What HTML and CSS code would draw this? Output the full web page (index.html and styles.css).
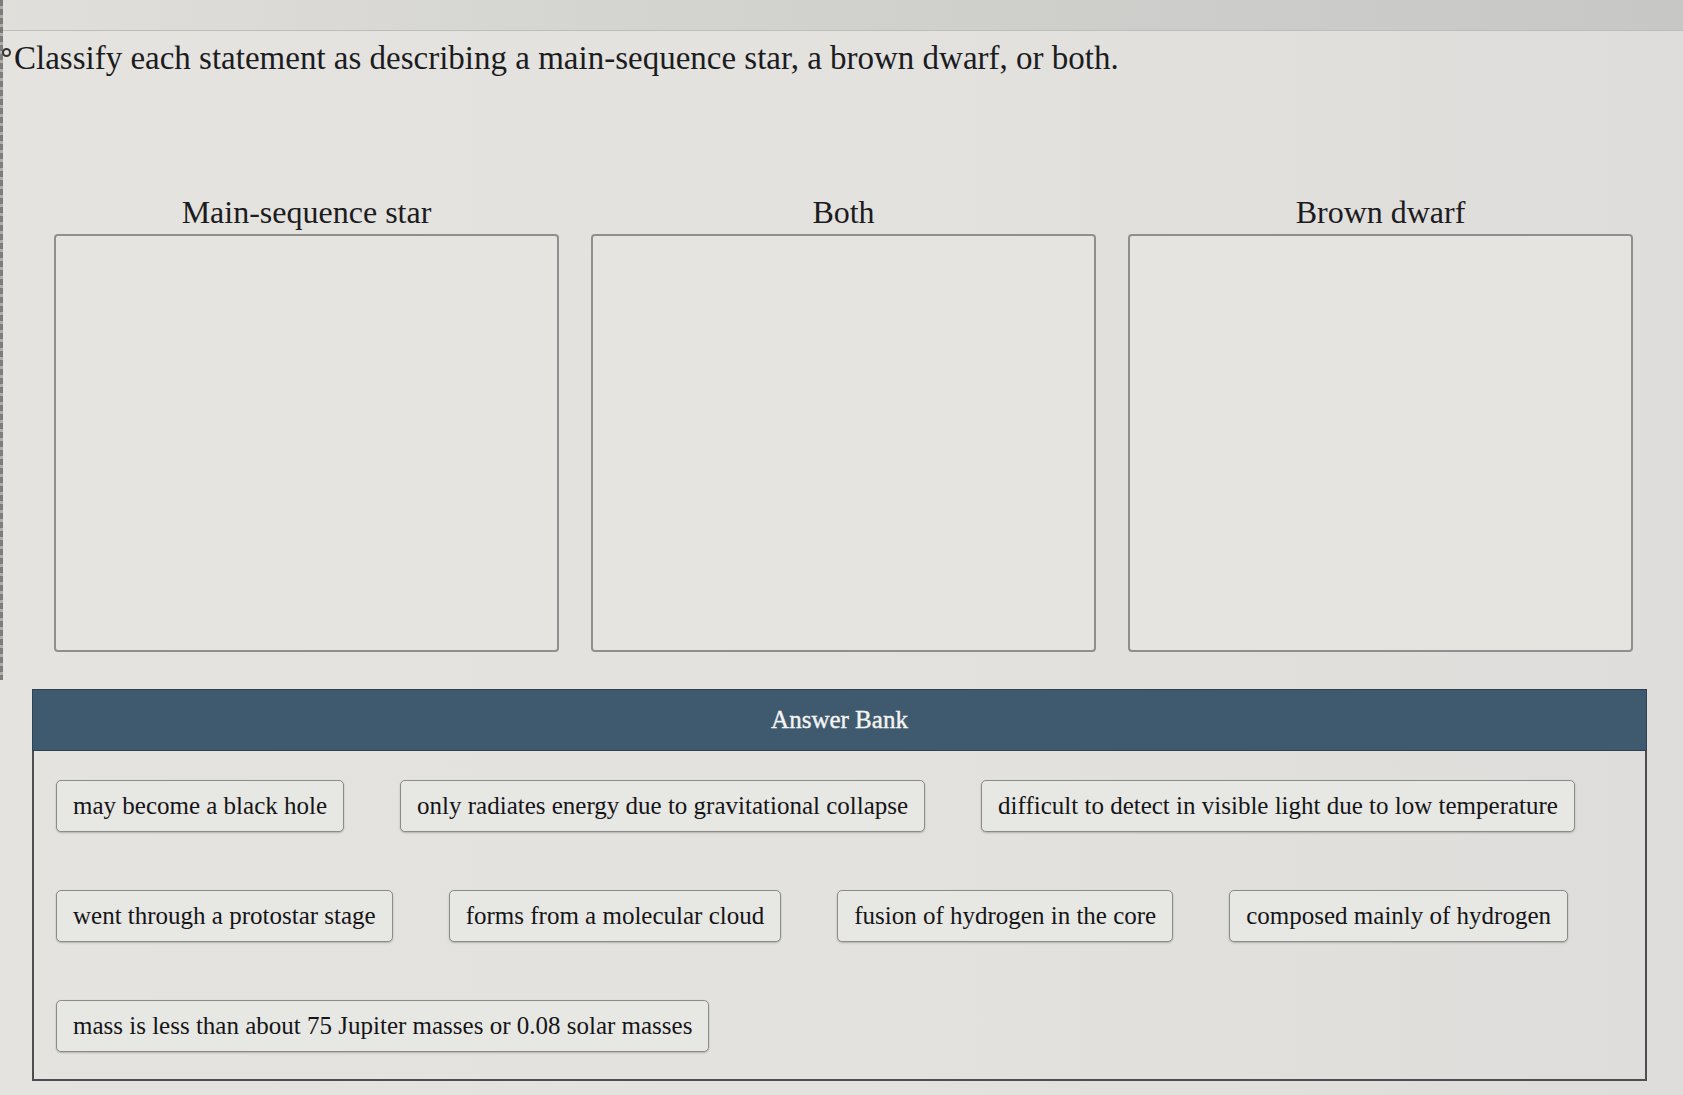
FILE: index.html
```html
<!DOCTYPE html>
<html lang="en">
<head>
<meta charset="utf-8">
<title>Classify statements</title>
<link rel="stylesheet" href="styles.css">
</head>
<body>
<div class="topband"></div>
<div class="edge"></div>
<main class="page">
  <h1 class="prompt"><span class="marker"></span>Classify each statement as describing a main-sequence star, a brown dwarf, or both.</h1>

  <div class="columns">
    <div class="col">
      <div class="col-title">Main-sequence star</div>
      <div class="dropzone"></div>
    </div>
    <div class="col">
      <div class="col-title">Both</div>
      <div class="dropzone"></div>
    </div>
    <div class="col">
      <div class="col-title">Brown dwarf</div>
      <div class="dropzone"></div>
    </div>
  </div>

  <section class="bank">
    <div class="bank-head">Answer Bank</div>
    <div class="bank-body">
      <div class="chip">may become a black hole</div>
      <div class="chip">only radiates energy due to gravitational collapse</div>
      <div class="chip">difficult to detect in visible light due to low temperature</div>
      <div class="chip">went through a protostar stage</div>
      <div class="chip">forms from a molecular cloud</div>
      <div class="chip">fusion of hydrogen in the core</div>
      <div class="chip">composed mainly of hydrogen</div>
      <div class="chip">mass is less than about 75 Jupiter masses or 0.08 solar masses</div>
    </div>
  </section>
</main>
</body>
</html>
```

FILE: styles.css
```css
html, body {
  margin: 0;
  padding: 0;
}

body {
  width: 1683px;
  height: 1095px;
  overflow: hidden;
  background: linear-gradient(90deg, #e4e3df 0%, #e3e2de 50%, #dedddb 100%);
  font-family: "Liberation Serif", "Times New Roman", serif;
  color: #1c1c1e;
  position: relative;
}

.topband {
  height: 30px;
  background: linear-gradient(90deg, #e0dfdb 0%, #d3d3d0 40%, #c7c7c5 100%);
  border-bottom: 1px solid #bdbdbb;
}

.edge {
  position: absolute;
  left: 0;
  top: 0;
  width: 3px;
  height: 680px;
  background: repeating-linear-gradient(180deg, #3a3a3a 0 6px, #8a8a8a 6px 9px);
  opacity: 0.6;
}

.prompt {
  margin: 8px 0 0 0;
  padding-left: 14px;
  font-size: 33px;
  line-height: 38px;
  font-weight: normal;
  position: relative;
}

.marker {
  position: absolute;
  left: 2px;
  top: 9px;
  width: 9px;
  height: 9px;
  border: 2px solid #333;
  border-radius: 50%;
  box-sizing: border-box;
}

.columns {
  display: grid;
  grid-template-columns: repeat(3, 505px);
  column-gap: 32px;
  margin: 116px 0 0 54px;
}

.col {
  display: flex;
  flex-direction: column;
}

.col-title {
  text-align: center;
  font-size: 32px;
  line-height: 38px;
  margin-bottom: 3px;
}

.dropzone {
  height: 414px;
  border: 2px solid #8f8f8f;
  border-radius: 4px;
  background: #e5e4e0;
}

.bank {
  margin: 37px 0 0 32px;
  width: 1615px;
  box-sizing: border-box;
}

.bank-head {
  height: 62px;
  background: #3f5a6f;
  border: 1px solid #2f4354;
  color: #f4f4f2;
  font-size: 25px;
  -webkit-text-stroke: 0.4px #f4f4f2;
  display: flex;
  align-items: center;
  justify-content: center;
  box-sizing: border-box;
}

.bank-body {
  border: 2px solid #4e4e50;
  border-top: none;
  padding: 29px 22px 32px 22px;
  display: flex;
  flex-wrap: wrap;
  column-gap: 56px;
  row-gap: 58px;
  height: 330px;
  box-sizing: border-box;
  align-content: flex-start;
}

.chip {
  font-size: 25px;
  line-height: 30px;
  padding: 10px 16px;
  border: 1px solid #8b8b89;
  border-radius: 5px;
  background: #e7e7e4;
  box-shadow: 0 1px 2px rgba(0, 0, 0, 0.22);
  white-space: nowrap;
  color: #151517;
}
```
